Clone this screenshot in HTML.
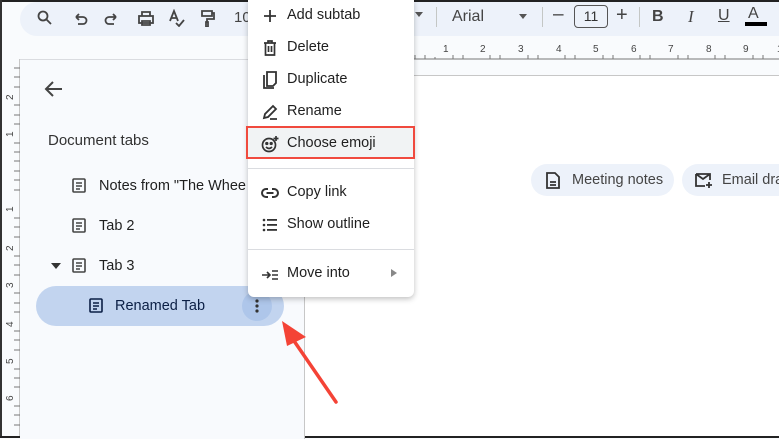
<!DOCTYPE html>
<html><head><style>
*{margin:0;padding:0;box-sizing:border-box}
body{width:779px;height:438px;overflow:hidden;background:#f9fbfd;font-family:"Liberation Sans",Arial,sans-serif;position:relative;color:#1f1f1f}
.abs{position:absolute}
.tb{left:20px;top:2px;width:800px;height:34px;background:#edf2fa;border-radius:17px}
.ti{position:absolute;top:9px;font-size:15px;color:#444}
.menu{left:248px;top:0;width:166px;height:297px;background:#fff;border-radius:0 0 6px 6px;box-shadow:0 2px 6px rgba(0,0,0,.25)}
.mi{position:absolute;left:39px;font-size:14.5px;color:#1f1f1f}
.ic{position:absolute;left:13px;width:18px;height:18px}
.side{left:20px;top:59px;width:285px;height:380px;background:#f8fafd;border-right:1px solid #c7c7c7;border-top:1px solid #dadce0}
.tab{position:absolute;font-size:14.5px;color:#1f1f1f}
</style></head><body>
<div class="abs" style="left:0;top:0;width:779px;height:2px;background:#222"></div>
<div class="abs" style="left:0;top:0;width:2px;height:438px;background:#333"></div>
<div class="abs" style="left:0;top:436px;width:779px;height:2px;background:#222"></div>
<div class="abs tb"></div>
<svg class="abs" style="left:36px;top:9px" width="200" height="18" fill="none" stroke="#444" stroke-width="1.8">
<circle cx="7" cy="7" r="4.5"/><path d="M10 10l5 5"/>
<path d="M40 8h7a3.5 3.5 0 010 7h-5M40 8l3-3M40 8l3 3"/>
<path d="M80 8h-7a3.5 3.5 0 000 7h5M80 8l-3-3M80 8l-3 3"/>
<rect x="103" y="7" width="14" height="7"/><path d="M106 7V3h8v4M106 12h8v4h-8z"/>
<path d="M134 12l4-10 4 10M135 9h6M140 14l3 3 5-6"/>
<path d="M166 2h10v5h-10zM176 4h2v6h-7v3M170 13h2v5h-2z"/>
</svg>
<div class="ti" style="left:234px">10</div>
<div class="ti" style="left:452px;color:#444;font-size:16px;top:8px">Arial</div>
<div class="abs" style="left:415px;top:12px;border:4px solid transparent;border-top:5px solid #555"></div>
<div class="abs" style="left:519px;top:14px;border:4px solid transparent;border-top:5px solid #555"></div>
<div class="abs" style="left:436px;top:7px;width:1px;height:20px;background:#c4c7c5"></div>
<div class="abs" style="left:542px;top:7px;width:1px;height:20px;background:#c4c7c5"></div>
<div class="abs" style="left:639px;top:7px;width:1px;height:20px;background:#c4c7c5"></div>
<div class="ti" style="left:553px;font-size:19px;top:4px">–</div>
<div class="abs" style="left:574px;top:5px;width:34px;height:23px;border:1px solid #555;border-radius:4px;font-size:14px;text-align:center;line-height:21px;color:#333">11</div>
<div class="ti" style="left:616px;font-size:20px;top:4px">+</div>
<div class="ti" style="left:652px;font-weight:bold;font-size:16px;top:8px">B</div>
<div class="ti" style="left:688px;font-style:italic;font-family:'Liberation Serif';font-size:17px;top:7px">I</div>
<div class="ti" style="left:718px;text-decoration:underline;font-size:16px;top:7px">U</div>
<div class="ti" style="left:748px;top:5px;font-size:16px">A</div>
<div class="abs" style="left:745px;top:22px;width:22px;height:4px;background:#000"></div>
<!-- horizontal ruler -->
<div class="abs" style="left:305px;top:75px;width:474px;height:1px;background:#c7c7c7"></div>
<svg class="abs" style="left:410px;top:40px" width="369" height="25" font-size="10" fill="#444" font-family="Liberation Sans">
<path d="M0 19H369" stroke="#777"/>
<g stroke="#777">
<path d="M5 15v4M15 15v4M25 17v2M43 15v4M53 15v4M80 15v4M90 15v4M118 15v4M128 15v4M155 15v4M165 15v4M193 15v4M203 15v4M230 15v4M240 15v4M268 15v4M278 15v4M305 15v4M315 15v4M343 15v4M353 15v4"/>
</g>
<text x="33" y="12">1</text><text x="70" y="12">2</text><text x="108" y="12">3</text><text x="146" y="12">4</text><text x="183" y="12">5</text><text x="221" y="12">6</text><text x="258" y="12">7</text><text x="296" y="12">8</text><text x="333" y="12">9</text><text x="367" y="12">1</text>
</svg>
<!-- page -->
<div class="abs" style="left:305px;top:76px;width:474px;height:360px;background:#fff"></div>
<div class="abs" style="left:531px;top:164px;width:143px;height:32px;background:#edf2fa;border-radius:16px;font-size:14.5px;color:#444;padding:8px 0 0 41px">Meeting notes</div>
<svg class="abs" style="left:546px;top:172px" width="14" height="17" fill="none" stroke="#333" stroke-width="1.8"><path d="M1 1h8l4 4v11H1zM4 10h6M4 13h6"/></svg>
<div class="abs" style="left:682px;top:164px;width:120px;height:32px;background:#edf2fa;border-radius:16px;font-size:14.5px;color:#444;padding:8px 0 0 40px">Email draft</div>
<svg class="abs" style="left:695px;top:173px" width="18" height="15" fill="none" stroke="#333" stroke-width="1.8"><path d="M1 1h14v6M1 1v12h9M1 1l7 5 7-5M14 9v6M11 12h6"/></svg>
<!-- vertical ruler -->
<div class="abs" style="left:2px;top:59px;width:18px;height:377px;background:#f9fbfd;border-right:1px solid #c7c7c7"></div>
<svg class="abs" style="left:2px;top:59px" width="18" height="377" font-size="10" fill="#444" font-family="Liberation Sans" stroke="#777">
<path d="M12 9h6M12 18h6M12 28h6M12 46h6M12 56h6M12 65h6M12 84h6M12 93h6M12 102h6M12 112h6M12 121h6M12 131h6M12 159h6M12 168h6M12 178h6M12 197h6M12 206h6M12 216h6M12 234h6M12 244h6M12 253h6M12 272h6M12 281h6M12 291h6M12 310h6M12 319h6M12 328h6M12 347h6M12 356h6M12 366h6"/>
<g stroke="none"><text x="3" y="41" transform="rotate(-90 7 37)">2</text><text x="3" y="78" transform="rotate(-90 7 74)">1</text><text x="3" y="153" transform="rotate(-90 7 149)">1</text><text x="3" y="192" transform="rotate(-90 7 188)">2</text><text x="3" y="229" transform="rotate(-90 7 225)">3</text><text x="3" y="268" transform="rotate(-90 7 264)">4</text><text x="3" y="305" transform="rotate(-90 7 301)">5</text><text x="3" y="342" transform="rotate(-90 7 338)">6</text></g>
</svg>
<!-- sidebar -->
<div class="abs side"></div>
<svg class="abs" style="left:44px;top:80px" width="20" height="18" fill="none" stroke="#444" stroke-width="2"><path d="M18 9H3M9 2L2 9l7 7"/></svg>
<div class="tab" style="left:48px;top:132px;font-size:15px;color:#333">Document tabs</div>
<svg width="0" height="0" style="position:absolute"><defs><g id="doc"><rect x="1" y="1" width="12" height="13" rx="1" fill="none" stroke="currentColor" stroke-width="1.6"/><path d="M4 5h6M4 8h6M4 11h4" stroke="currentColor" stroke-width="1.5"/></g></defs></svg>
<svg class="abs" style="left:72px;top:178px;color:#444" width="14" height="15"><use href="#doc"/></svg>
<div class="tab" style="left:99px;top:178px">Notes from "The Whee</div>
<svg class="abs" style="left:72px;top:218px;color:#444" width="14" height="15"><use href="#doc"/></svg>
<div class="tab" style="left:99px;top:218px">Tab 2</div>
<div class="abs" style="left:51px;top:263px;border:5px solid transparent;border-top:6px solid #333"></div>
<svg class="abs" style="left:72px;top:258px;color:#444" width="14" height="15"><use href="#doc"/></svg>
<div class="tab" style="left:99px;top:258px">Tab 3</div>
<div class="abs" style="left:36px;top:286px;width:248px;height:40px;background:#c2d4ef;border-radius:20px"></div>
<svg class="abs" style="left:89px;top:298px;color:#0b1f45" width="14" height="15"><use href="#doc"/></svg>
<div class="tab" style="left:115px;top:298px;color:#0b1f45">Renamed Tab</div>
<div class="abs" style="left:242px;top:291px;width:30px;height:30px;border-radius:50%;background:#aec6ea"></div>
<svg class="abs" style="left:254px;top:298px" width="6" height="16" fill="#333"><circle cx="3" cy="3" r="1.6"/><circle cx="3" cy="8" r="1.6"/><circle cx="3" cy="13" r="1.6"/></svg>
<!-- arrow -->
<svg class="abs" style="left:270px;top:310px" width="80" height="100"><path d="M66 92L22 28" stroke="#f44336" stroke-width="3.5" stroke-linecap="round"/><path d="M12 11L36 27L17 36Z" fill="#f44336"/></svg>
<!-- menu -->
<div class="abs menu">
<svg class="ic" style="top:7px" fill="none" stroke="#333" stroke-width="1.8"><path d="M9 3v12M3 9h12"/></svg>
<div class="mi" style="top:7px">Add subtab</div>
<svg class="ic" style="top:39px" fill="none" stroke="#333" stroke-width="1.7"><path d="M3 4h12M7 4V2h4v2M4.5 4v12h9V4M7.5 7v6M10.5 7v6"/></svg>
<div class="mi" style="top:39px">Delete</div>
<svg class="ic" style="top:71px" fill="none" stroke="#333" stroke-width="1.8"><path d="M3 4v13h10"/><path d="M6 1h9v11l-3 3H6z"/></svg>
<div class="mi" style="top:71px">Duplicate</div>
<svg class="ic" style="top:103px" fill="none" stroke="#333" stroke-width="1.8"><path d="M3 15l1-4 8-8 3 3-8 8zM9 16h7"/></svg>
<div class="mi" style="top:103px">Rename</div>
<div class="abs" style="left:-2px;top:126px;width:169px;height:33px;background:#f1f3f4;border:2px solid #f04a3e"></div>
<svg class="ic" style="top:135px" fill="none" stroke="#333" stroke-width="1.7"><circle cx="8" cy="10" r="6.5"/><circle cx="5.8" cy="8.5" r=".8" fill="#333"/><circle cx="10.2" cy="8.5" r=".8" fill="#333"/><path d="M5 12q3 3 6 0M15 1v5M12.5 3.5h5"/></svg>
<div class="mi" style="top:135px">Choose emoji</div>
<div class="abs" style="left:0;top:168px;width:166px;height:1px;background:#dadce0"></div>
<svg class="ic" style="top:184px" fill="none" stroke="#333" stroke-width="2"><path d="M7 5H5a4 4 0 000 8h2M11 5h2a4 4 0 010 8h-2M5.5 9h7"/></svg>
<div class="mi" style="top:184px">Copy link</div>
<svg class="ic" style="top:216px" fill="#333"><circle cx="3" cy="4" r="1.3"/><circle cx="3" cy="9" r="1.3"/><circle cx="3" cy="14" r="1.3"/><rect x="6" y="3" width="10" height="1.8"/><rect x="6" y="8" width="10" height="1.8"/><rect x="6" y="13" width="10" height="1.8"/></svg>
<div class="mi" style="top:216px">Show outline</div>
<div class="abs" style="left:0;top:249px;width:166px;height:1px;background:#dadce0"></div>
<svg class="ic" style="top:265px" fill="none" stroke="#333" stroke-width="1.6"><path d="M1 10h7M6 7l3 3-3 3M11 6h6M11 10h6M11 14h6"/></svg>
<div class="mi" style="top:265px">Move into</div>
<div class="abs" style="left:143px;top:269px;border:4px solid transparent;border-left:6px solid #888"></div>
</div>
</body></html>
